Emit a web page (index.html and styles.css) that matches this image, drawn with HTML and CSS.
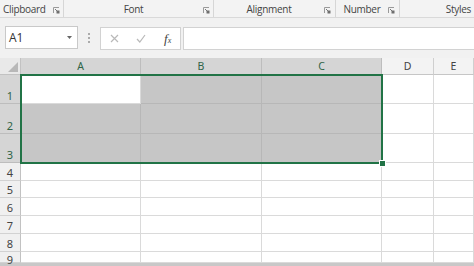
FILE: index.html
```html
<!DOCTYPE html>
<html>
<head>
<meta charset="utf-8">
<link rel="stylesheet" href="styles.css">
</head>
<body>
<div class="app">
  <div class="ribbon">
    <div class="group g-clip"><span class="glabel">Clipboard</span><svg class="launch" width="7" height="7" viewBox="0 0 7 7"><path d="M0.5 6V0.5H6" fill="none" stroke="#9a9a9a" stroke-width="1"/><path d="M2 2L5.5 5.5" stroke="#777" stroke-width="1"/><rect x="3.5" y="3.5" width="3" height="3" fill="#6f6f6f"/></svg></div>
    <div class="group g-font"><span class="glabel">Font</span><svg class="launch" width="7" height="7" viewBox="0 0 7 7"><path d="M0.5 6V0.5H6" fill="none" stroke="#9a9a9a" stroke-width="1"/><path d="M2 2L5.5 5.5" stroke="#777" stroke-width="1"/><rect x="3.5" y="3.5" width="3" height="3" fill="#6f6f6f"/></svg></div>
    <div class="group g-align"><span class="glabel">Alignment</span><svg class="launch" width="7" height="7" viewBox="0 0 7 7"><path d="M0.5 6V0.5H6" fill="none" stroke="#9a9a9a" stroke-width="1"/><path d="M2 2L5.5 5.5" stroke="#777" stroke-width="1"/><rect x="3.5" y="3.5" width="3" height="3" fill="#6f6f6f"/></svg></div>
    <div class="group g-num"><span class="glabel">Number</span><svg class="launch" width="7" height="7" viewBox="0 0 7 7"><path d="M0.5 6V0.5H6" fill="none" stroke="#9a9a9a" stroke-width="1"/><path d="M2 2L5.5 5.5" stroke="#777" stroke-width="1"/><rect x="3.5" y="3.5" width="3" height="3" fill="#6f6f6f"/></svg></div>
    <div class="group g-styles"><span class="glabel">Styles</span></div>
  </div>

  <div class="fbar">
    <div class="namebox"><span class="nb-text">A1</span><svg width="5" height="3" viewBox="0 0 5 3"><path d="M0 0H5L2.5 3Z" fill="#666"/></svg></div>
    <div class="grip"><i></i><i></i><i></i></div>
    <div class="fbtns">
      <svg width="9" height="9" viewBox="0 0 9 9"><path d="M1 1L8 8M8 1L1 8" stroke="#b9b9b9" stroke-width="1.2" fill="none"/></svg>
      <svg width="10" height="9" viewBox="0 0 10 9"><path d="M1 5L3.8 8L9 1" stroke="#b9b9b9" stroke-width="1.2" fill="none"/></svg>
      <span class="fx"><i>f</i><small>x</small></span>
    </div>
    <div class="finput"></div>
  </div>

  <div class="sheet">
    <div class="corner"><svg width="10" height="10" viewBox="0 0 10 10"><path d="M10 0V10H0Z" fill="#b8b8b8"/></svg></div>
    <div class="ch hs">A</div>
    <div class="ch hs">B</div>
    <div class="ch hs">C</div>
    <div class="ch">D</div>
    <div class="ch">E</div>

    <div class="rh hs">1</div>
    <div class="c active"></div><div class="c s"></div><div class="c s"></div><div class="c"></div><div class="c"></div>

    <div class="rh hs">2</div>
    <div class="c s"></div><div class="c s"></div><div class="c s"></div><div class="c"></div><div class="c"></div>

    <div class="rh hs">3</div>
    <div class="c s"></div><div class="c s"></div><div class="c s"></div><div class="c"></div><div class="c"></div>

    <div class="rh">4</div>
    <div class="c"></div><div class="c"></div><div class="c"></div><div class="c"></div><div class="c"></div>
    <div class="rh">5</div>
    <div class="c"></div><div class="c"></div><div class="c"></div><div class="c"></div><div class="c"></div>
    <div class="rh">6</div>
    <div class="c"></div><div class="c"></div><div class="c"></div><div class="c"></div><div class="c"></div>
    <div class="rh">7</div>
    <div class="c"></div><div class="c"></div><div class="c"></div><div class="c"></div><div class="c"></div>
    <div class="rh">8</div>
    <div class="c"></div><div class="c"></div><div class="c"></div><div class="c"></div><div class="c"></div>
    <div class="rh cut">9</div>
    <div class="c"></div><div class="c"></div><div class="c"></div><div class="c"></div><div class="c"></div>

    <div class="selbox"></div>
    <div class="handle"></div>
  </div>
  <div class="hscroll"></div>
</div>
</body>
</html>
```

FILE: styles.css
```css
* { box-sizing: border-box; }
html, body { margin: 0; padding: 0; }
body {
  width: 474px;
  height: 266px;
  overflow: hidden;
  background: #fff;
  font-family: "Open Sans", "Noto Sans", sans-serif;
}
.app { width: 474px; height: 266px; overflow: hidden; }

/* ribbon group labels */
.ribbon {
  display: flex;
  height: 18px;
  background: #f3f3f3;
  border-bottom: 1px solid #d9d9d9;
}
.group {
  display: flex;
  align-items: center;
  border-right: 1px solid #d6d6d6;
  height: 17px;
  padding-top: 2px;
}
.glabel {
  flex: 1;
  text-align: center;
  font-size: 10px;
  letter-spacing: -0.3px;
  color: #444;
  line-height: 15px;
  white-space: nowrap;
}
.launch { flex: none; margin-right: 3px; margin-top: 1px; }
.g-clip { width: 64px; }
.g-clip .glabel { text-align: left; padding-left: 3px; }
.g-font { width: 150px; }
.g-align { width: 122px; }
.g-align .launch { margin-right: 4px; }
.g-num { width: 64px; }
.g-num .launch { margin-right: 4px; }
.g-styles { flex: 1; border-right: none; }
.g-styles .glabel { text-align: right; padding-right: 3px; }

/* formula bar */
.fbar {
  display: flex;
  align-items: flex-start;
  height: 40px;
  padding-top: 8px;
  background: #f1f1f1;
}
.namebox {
  width: 73px;
  height: 23px;
  margin-left: 5px;
  background: #fff;
  border: 1px solid #c9c9c9;
  display: flex;
  align-items: center;
  justify-content: space-between;
  padding: 0 5px 0 3px;
}
.nb-text { font-size: 12px; color: #333; }
.grip {
  width: 22px;
  height: 23px;
  display: flex;
  flex-direction: column;
  align-items: center;
  justify-content: center;
  gap: 2px;
}
.grip i { display: block; width: 2px; height: 2px; background: #ababab; }
.fbtns {
  width: 81px;
  height: 23px;
  margin-top: 1px;
  background: #fff;
  border: 1px solid #d2d2d2;
  display: flex;
  align-items: center;
  padding-left: 9px;
  gap: 17px;
}
.fx {
  font-family: "Liberation Serif", serif;
  color: #444;
  font-size: 13px;
  line-height: 1;
  margin-left: 1px;
}
.fx i { font-style: italic; }
.fx small { font-style: italic; font-size: 8px; }
.finput {
  flex: 1;
  height: 23px;
  margin-top: 1px;
  margin-left: 2px;
  background: #fff;
  border: 1px solid #d2d2d2;
  border-right: none;
}

/* sheet grid */
.sheet {
  position: relative;
  display: grid;
  grid-template-columns: 21px 120px 121px 120px 52px 40px;
  grid-template-rows: 17px 29px 30px 29px 18px 17px 18px 18px 18px 11px;
  font-family: "Noto Sans", "Open Sans", sans-serif;
}
.corner {
  background: #e9e9e9;
  border-right: 1px solid #c2c2c2;
  border-bottom: 1px solid #c2c2c2;
  display: flex;
  align-items: flex-end;
  justify-content: flex-end;
  padding: 0 2px 2px 0;
}
.ch {
  background: #f3f3f3;
  border-right: 1px solid #cfcfcf;
  border-bottom: 1px solid #c6c6c6;
  font-size: 10.5px;
  color: #444;
  display: flex;
  align-items: center;
  justify-content: center;
  line-height: 1;
}
.rh {
  background: #f0f0f0;
  border-right: 1px solid #c2c2c2;
  border-bottom: 1px solid #d2d2d2;
  font-size: 11px;
  color: #444;
  display: flex;
  align-items: flex-end;
  justify-content: center;
  padding-bottom: 2px;
  line-height: 1;
}
.rh.cut { align-items: flex-start; padding-top: 2px; padding-bottom: 0; }
.ch.hs, .rh.hs {
  background: #d5d5d5;
  color: #2f6447;
  border-right-color: #bdbdbd;
  border-bottom-color: #bdbdbd;
}
.c {
  border-right: 1px solid #dadada;
  border-bottom: 1px solid #dadada;
  background: #fff;
}
.c.s {
  background: #c6c6c6;
  border-right-color: #b7b7b7;
  border-bottom-color: #b7b7b7;
}
.selbox {
  position: absolute;
  left: 20px;
  top: 16px;
  width: 363px;
  height: 90px;
  border: 2px solid #217346;
  pointer-events: none;
}
.handle {
  position: absolute;
  left: 379px;
  top: 102px;
  width: 7px;
  height: 7px;
  background: #217346;
  border: 1px solid #fff;
}
.hscroll {
  height: 3px;
  background: #c8c8c8;
}
```
